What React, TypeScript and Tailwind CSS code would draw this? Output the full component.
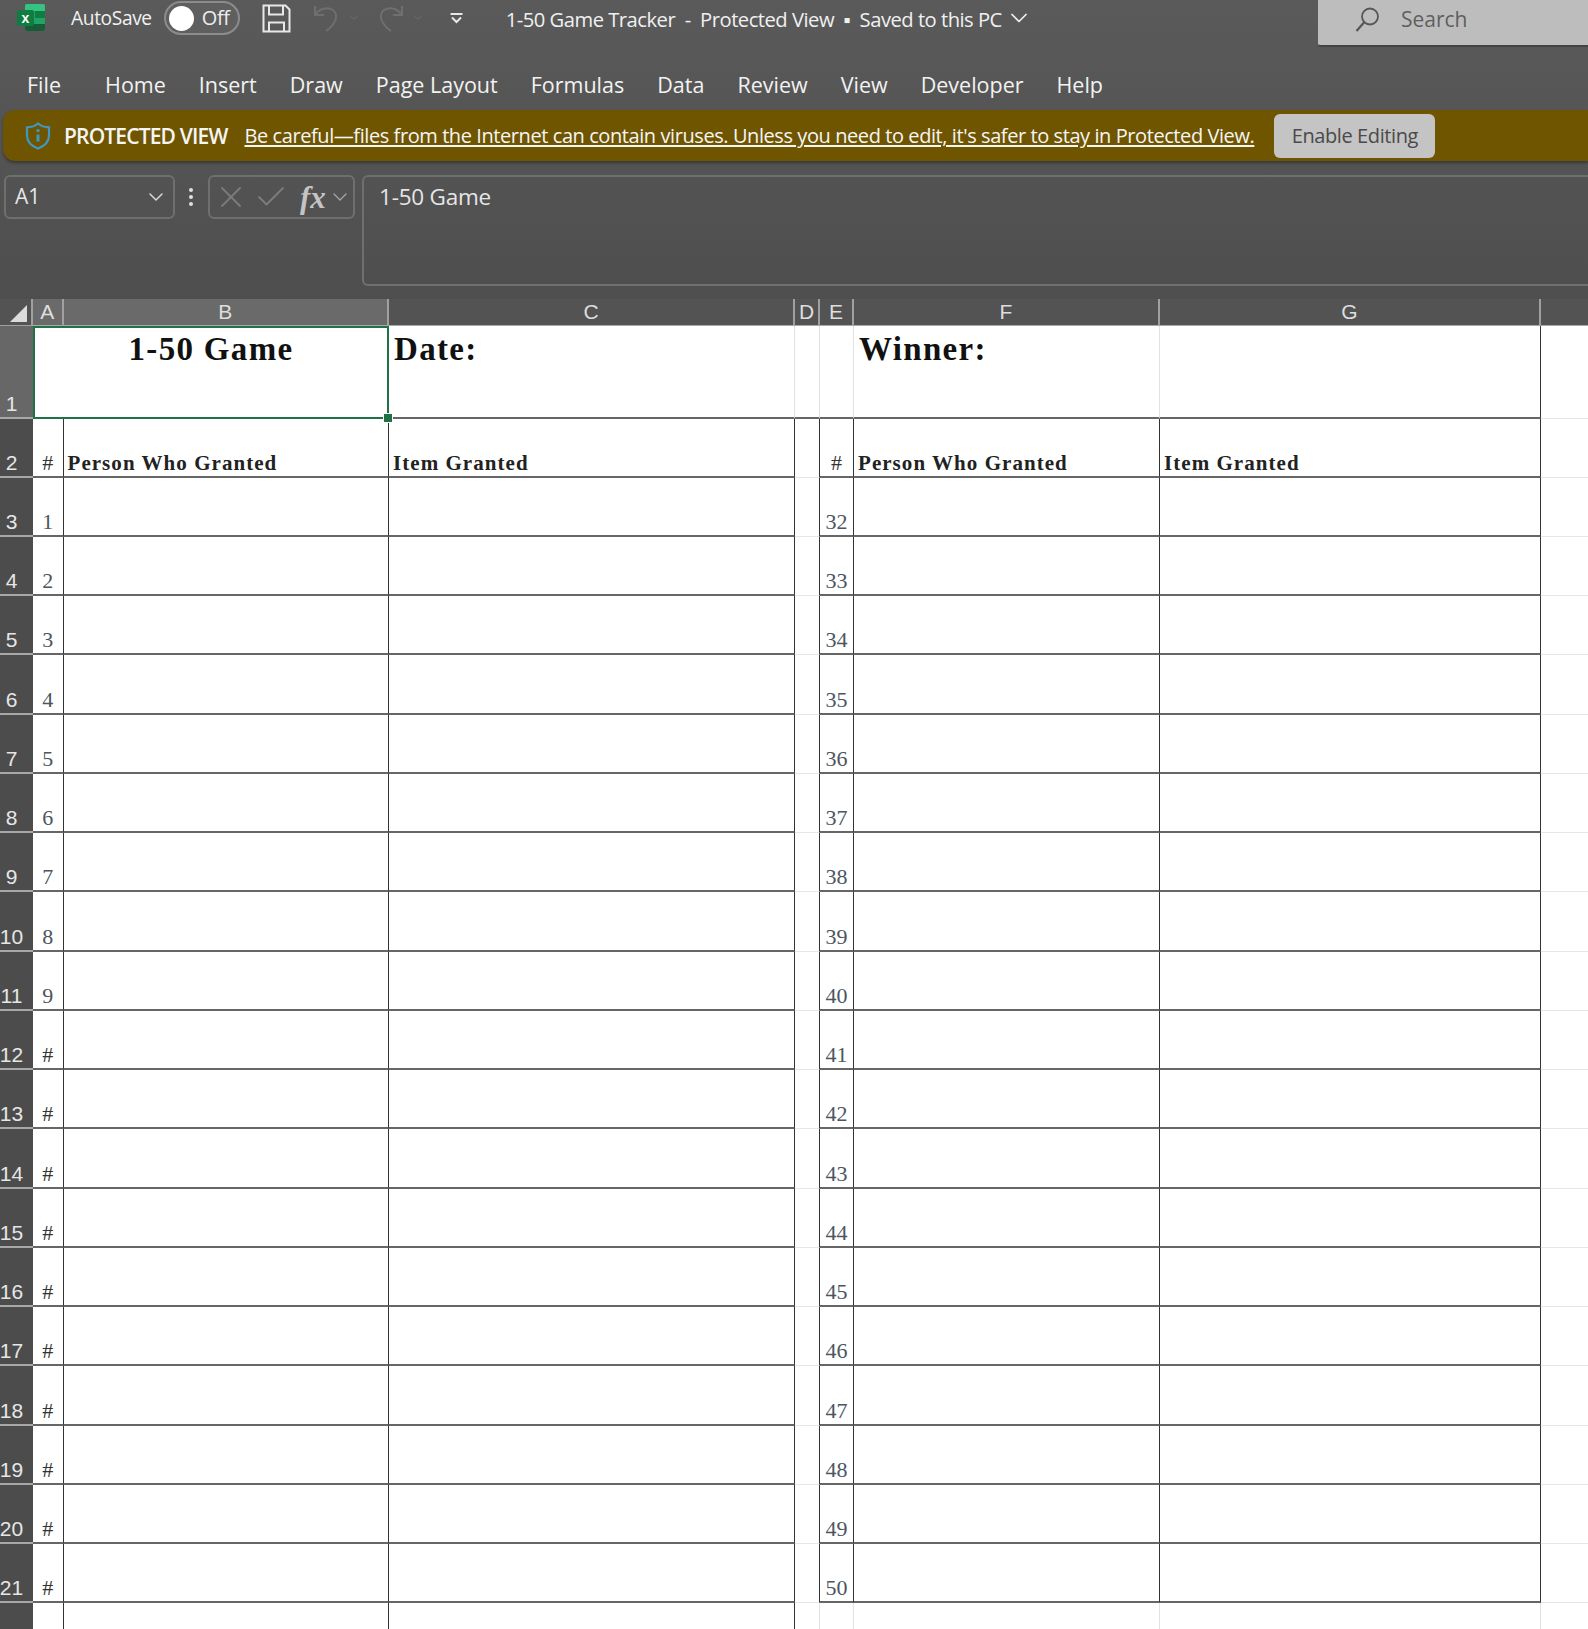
import { Check, ChevronDown, X } from 'lucide-react'

const TABS = ['Home', 'Insert', 'Draw', 'Page Layout', 'Formulas', 'Data', 'Review', 'View', 'Developer', 'Help']

// rows 3..21 hold 1-19 on the left (the narrow column shows # from 10 up) and 32-50 on the right
const ROWS = Array.from({ length: 19 }, (_, i) => ({
  row: i + 3,
  left: i < 9 ? String(i + 1) : '#',
  right: String(i + 32),
}))

const SERIF = "font-['Liberation_Serif',serif]"

function ExcelLogo() {
  return (
    <svg width="29" height="28" viewBox="0 0 29 28" className="shrink-0">
      <rect x="8" y="0" width="20" height="27" rx="2" fill="#21a366" />
      <path d="M8 2a2 2 0 0 1 2-2h16a2 2 0 0 1 2 2v5H8z" fill="#33c481" />
      <rect x="18" y="7" width="10" height="7" fill="#107c41" />
      <path d="M8 20h20v5a2 2 0 0 1-2 2H10a2 2 0 0 1-2-2z" fill="#185c37" />
      <rect x="0" y="6" width="17" height="16" rx="2" fill="#107c41" />
      <text x="8.5" y="18.5" textAnchor="middle" fill="#fff" fontSize="14" fontWeight="700" fontFamily="Liberation Sans">x</text>
    </svg>
  )
}

function SaveIcon() {
  return (
    <svg width="29" height="29" viewBox="0 0 29 29" fill="none" stroke="#e8e8e8" strokeWidth="2" className="ml-[22px] shrink-0">
      <path d="M1.5 1.5h22l4 4v22h-26z" />
      <path d="M7 1.5v9h14v-9" />
      <path d="M7 27.5v-9h15v9" />
    </svg>
  )
}

function UndoIcon({ flip }: { flip?: boolean }) {
  return (
    <svg width="27" height="29" viewBox="0 0 27 29" fill="none" stroke="#6f6f6f" strokeWidth="2" className={flip ? '-scale-x-100 shrink-0' : 'shrink-0'}>
      <path d="M3 2v9h9" />
      <path d="M3 11c4-6 12-9 18-5 6 5 3 14-7 21" />
    </svg>
  )
}

function ShieldIcon() {
  return (
    <svg width="26" height="28" viewBox="0 0 26 28" fill="none" stroke="#3f97c4" strokeWidth="2.2" className="shrink-0">
      <path d="M13 1.5c3 2.6 7 3.8 11 3.8v8.2c0 6-4.400 10.500-11 13-6.600-2.500-11-7-11-13V5.300c4 0 8-1.200 11-3.800z" />
      <path d="M13 12.500v7" strokeWidth="3" />
      <circle cx="13" cy="8.600" r="1.700" fill="#3f97c4" stroke="none" />
    </svg>
  )
}

function SearchIcon() {
  return (
    <svg width="25" height="26" viewBox="0 0 25 26" fill="none" stroke="#555" strokeWidth="1.800" className="shrink-0">
      <circle cx="15" cy="9.500" r="8" />
      <path d="M9 15.500L1.500 24" strokeWidth="2.200" />
    </svg>
  )
}

function ColHead({ label, selected, last }: { label: string; selected?: boolean; last?: boolean }) {
  return (
    <div
      className={`flex items-center justify-center border-b border-[#a9a9a9] pb-[2px] text-[21px] leading-none text-[#dedede] font-['Liberation_Sans',sans-serif] ${
        last ? '' : 'border-r-2 border-r-[#a0a0a0]'
      } ${selected ? 'bg-[#6a6a6a]' : 'bg-[#535353]'}`}
    >
      {label}
    </div>
  )
}

function RowHead({ label, selected }: { label: number; selected?: boolean }) {
  return (
    <div
      className={`flex items-end justify-center border-b-2 border-[#a8a8a8] pr-[10px] pb-[3px] text-[21px] leading-none text-[#e6e6e6] font-['Liberation_Sans',sans-serif] ${
        selected ? 'bg-[#676767]' : 'bg-[#4c4c4c]'
      }`}
    >
      {label}
    </div>
  )
}

function NumCell({ children, hash }: { children: string; hash?: boolean }) {
  return (
    <div className={`flex items-end justify-center border-b-2 border-r border-b-[#666666] border-r-[#333333] pb-[2px] text-[22px] leading-none ${hash ? 'text-[#333333]' : 'text-[#4d5560]'} ${SERIF}`}>
      {children}
    </div>
  )
}

function Blank() {
  return <div className="border-b-2 border-r border-b-[#666666] border-r-[#333333]" />
}

function HeadCell({ children }: { children: string }) {
  return (
    <div className={`flex items-end whitespace-nowrap border-b-2 border-r border-b-[#666666] border-r-[#333333] pb-[2px] pl-[4px] text-[21px] font-bold leading-none tracking-[0.05em] text-[#222222] ${SERIF}`}>
      {children}
    </div>
  )
}

function TitleCell({ children, border }: { children: string; border: string }) {
  return (
    <div className={`whitespace-nowrap pl-[5px] pt-[3px] text-[33px] font-bold leading-[40px] tracking-[0.04em] text-[#111111] ${SERIF} ${border}`}>
      {children}
    </div>
  )
}

export default function App() {
  return (
    <div className="flex h-[1629px] w-[1588px] flex-col overflow-hidden bg-[#4e4e4e] font-['Open_Sans',sans-serif]">
      <div className="bg-linear-to-b from-[#5a5a5a] to-[#4e4e4e]">
        {/* Title bar */}
        <div className="flex h-[53px] items-start">
          <div className="ml-[17px] mt-[4px]">
            <ExcelLogo />
          </div>
          <div className="flex h-[36px] items-center">
            <span className="ml-[25px] text-[19.200px] tracking-[-0.02em] text-[#f2f2f2]">AutoSave</span>
            <div className="ml-[12px] flex h-[34px] w-[76px] items-center rounded-full border-2 border-[#8c8c8c] bg-[#5f5f5f] pl-[3px]">
              <span className="h-[25px] w-[25px] rounded-full bg-white" />
              <span className="ml-[8px] text-[20px] tracking-[-0.02em] text-[#eeeeee]">Off</span>
            </div>
            <SaveIcon />
            <div className="ml-[21px] flex items-center gap-[9px]">
              <UndoIcon />
              <ChevronDown className="h-3 w-3 text-[#6f6f6f]" />
            </div>
            <div className="ml-[18px] flex items-center gap-[7px]">
              <UndoIcon flip />
              <ChevronDown className="h-3 w-3 text-[#6f6f6f]" />
            </div>
            <svg width="13" height="11" viewBox="0 0 13 11" fill="none" stroke="#e8e8e8" strokeWidth="2" className="ml-[26px]">
              <path d="M0.500 1h12" />
              <path d="M2 4.500l4.500 4.500 4.500-4.500" />
            </svg>
            <span className="ml-[43px] whitespace-pre pt-[2px] text-[20.200px] tracking-[-0.025em] text-[#f0f0f0]">
              1-50 Game Tracker  -  Protected View  ▪  Saved to this PC
            </span>
            <ChevronDown className="ml-[3px] h-7 w-7 text-[#eeeeee]" strokeWidth={1.500} />
          </div>
          <div className="ml-auto flex h-[47px] w-[270px] items-center rounded-bl-[3px] border-b-2 border-[#444444] bg-[#bdbdbd] pb-[6px] pl-[37px]">
            <SearchIcon />
            <span className="ml-[21px] text-[21px] text-[#5f5f5f]">Search</span>
          </div>
        </div>

        {/* Ribbon tabs */}
        <div className="flex h-[57px] items-center gap-[33px] pl-[27px] pt-[8px] text-[21.500px] text-[#f2f2f2]">
          <span className="mr-[11px]">File</span>
          {TABS.map(t => (
            <span key={t}>{t}</span>
          ))}
        </div>

        {/* Protected view banner */}
        <div className="ml-[3px] flex h-[51px] items-center rounded-l-xl bg-[#6f5500] pl-[22px] shadow-[0_2px_3px_rgba(0,0,0,0.35)]">
          <ShieldIcon />
          <span className="ml-[13px] whitespace-nowrap pt-[2px] text-[21px] font-semibold tracking-[-0.04em] text-[#f5f5f5]">PROTECTED VIEW</span>
          <span className="ml-[17px] whitespace-nowrap pt-[1px] text-[20px] tracking-[-0.021em] text-[#f5f5f5] underline decoration-[1.500px] underline-offset-2">
            Be careful—files from the Internet can contain viruses. Unless you need to edit, it's safer to stay in Protected View.
          </span>
          <button className="ml-[20px] flex h-[44px] w-[161px] items-center justify-center rounded-md bg-[#c4c4c4] text-[20px] tracking-[-0.02em] text-[#4a4a4a]">
            Enable Editing
          </button>
        </div>

        {/* Formula bar */}
        <div className="flex h-[138px] items-start pl-[4px] pt-[14px]">
          <div className="flex h-[44px] w-[171px] items-center justify-between rounded-md border-2 border-[#6f6f6f] pl-[9px] pr-[5px] text-[21px] text-[#e6e6e6]">
            A1
            <ChevronDown className="h-6 w-6 text-[#d8d8d8]" strokeWidth={1.500} />
          </div>
          <div className="ml-[14px] mt-[13px] flex flex-col gap-[3px]">
            <span className="h-[4px] w-[4px] rounded-full bg-[#e0e0e0]" />
            <span className="h-[4px] w-[4px] rounded-full bg-[#e0e0e0]" />
            <span className="h-[4px] w-[4px] rounded-full bg-[#e0e0e0]" />
          </div>
          <div className="ml-[15px] flex h-[44px] w-[147px] items-center rounded-md border-2 border-[#6f6f6f] pl-[3px]">
            <X className="h-[36px] w-[36px] shrink-0 text-[#7c7c7c]" strokeWidth={1.200} />
            <Check className="ml-[4px] h-[36px] w-[36px] shrink-0 text-[#7c7c7c]" strokeWidth={1.200} />
            <span className={`ml-[11px] text-[31px] font-bold italic leading-none text-[#c4c4c4] ${SERIF}`}>fx</span>
            <ChevronDown className="ml-[2px] h-6 w-6 shrink-0 text-[#a8a8a8]" strokeWidth={1.200} />
          </div>
          <div className="ml-[7px] h-[111px] flex-1 rounded-l-md border-y-2 border-l-2 border-[#6f6f6f] pl-[15px] pt-[3px] text-[22.500px] tracking-[-0.01em] text-[#e6e6e6]">
            1-50 Game
          </div>
        </div>
      </div>

      {/* Sheet */}
      <div className="grid flex-1 grid-cols-[33px_30.5px_325.5px_406px_25px_34px_306px_381px_1fr] grid-rows-[27px_92.5px_59px_repeat(19,59.25px)_1fr] bg-white">
        {/* column headings */}
        <div className="flex items-end justify-end border-b border-r-2 border-[#a0a0a0] bg-[#535353] pb-[3px] pr-[4px]">
          <svg width="17" height="17" viewBox="0 0 17 17">
            <path d="M17 0v17H0z" fill="#dcdcdc" />
          </svg>
        </div>
        <ColHead label="A" selected />
        <ColHead label="B" selected />
        <ColHead label="C" />
        <ColHead label="D" />
        <ColHead label="E" />
        <ColHead label="F" />
        <ColHead label="G" />
        <div className="border-b border-[#a9a9a9] bg-[#535353]" />

        {/* row 1 */}
        <RowHead label={1} selected />
        <div className={`relative col-span-2 border-[2.500px] border-[#1f7246] pt-[1px] text-center text-[33px] font-bold leading-[40px] tracking-[0.04em] text-[#111111] ${SERIF}`}>
          1-50 Game
          <span className="absolute -bottom-[6px] -right-[6px] h-[10px] w-[10px] border border-white bg-[#1f7246]" />
        </div>
        <TitleCell border="border-b-2 border-r border-b-[#666666] border-r-[#e2e2e2]">Date:</TitleCell>
        <div className="border-b-2 border-r border-b-[#666666] border-r-[#e2e2e2]" />
        <div className="border-b-2 border-r border-b-[#666666] border-r-[#e2e2e2]" />
        <TitleCell border="border-b-2 border-r border-b-[#666666] border-r-[#e2e2e2]">Winner:</TitleCell>
        <div className="border-b-2 border-r border-b-[#666666] border-r-[#333333]" />
        <div className="border-b border-[#e6e6e6]" />

        {/* row 2 */}
        <RowHead label={2} />
        <NumCell hash>#</NumCell>
        <HeadCell>Person Who Granted</HeadCell>
        <HeadCell>Item Granted</HeadCell>
        <div className="border-b border-r border-[#e6e6e6] border-r-[#333333]" />
        <NumCell hash>#</NumCell>
        <HeadCell>Person Who Granted</HeadCell>
        <HeadCell>Item Granted</HeadCell>
        <div className="border-b border-[#e6e6e6]" />

        {/* rows 3-21 */}
        {ROWS.map(r => (
          <div key={r.row} className="contents">
            <RowHead label={r.row} />
            <NumCell hash={r.left === '#'}>{r.left}</NumCell>
            <Blank />
            <Blank />
            <div className="border-b border-r border-[#e6e6e6] border-r-[#333333]" />
            <NumCell>{r.right}</NumCell>
            <Blank />
            <Blank />
            <div className="border-b border-[#e6e6e6]" />
          </div>
        ))}

        {/* row 22, cut off by the window */}
        <div className="bg-[#4c4c4c]" />
        <div className="border-r border-[#333333]" />
        <div className="border-r border-[#333333]" />
        <div className="border-r border-[#333333]" />
        <div className="border-r border-[#e2e2e2]" />
        <div className="border-r border-[#e2e2e2]" />
        <div className="border-r border-[#e2e2e2]" />
        <div className="border-r border-[#e2e2e2]" />
        <div />
      </div>
    </div>
  )
}
